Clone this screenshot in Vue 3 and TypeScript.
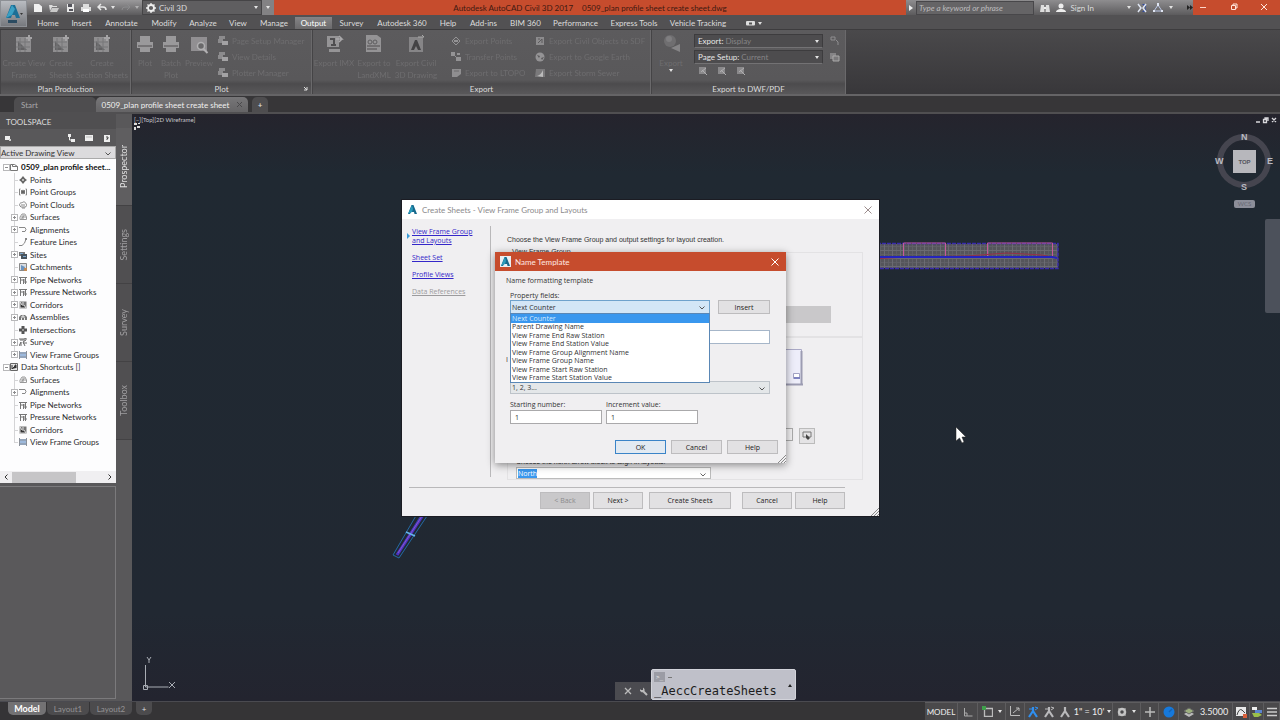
<script setup lang="ts">
import { ref } from 'vue'

interface TreeRow { label: string; icon: string; level: number; box?: string; last?: boolean }

const menus = ['Home', 'Insert', 'Annotate', 'Modify', 'Analyze', 'View', 'Manage', 'Output', 'Survey', 'Autodesk 360', 'Help', 'Add-ins', 'BIM 360', 'Performance', 'Express Tools', 'Vehicle Tracking']

const tree: TreeRow[] = [
  { label: '0509_plan profile sheet...', icon: 'drawing', level: 0, box: '-' },
  { label: 'Points', icon: 'point', level: 1 },
  { label: 'Point Groups', icon: 'pgroup', level: 1 },
  { label: 'Point Clouds', icon: 'cloud', level: 1 },
  { label: 'Surfaces', icon: 'surface', level: 1, box: '+' },
  { label: 'Alignments', icon: 'align', level: 1, box: '+' },
  { label: 'Feature Lines', icon: 'feature', level: 1 },
  { label: 'Sites', icon: 'site', level: 1, box: '+' },
  { label: 'Catchments', icon: 'catch', level: 1 },
  { label: 'Pipe Networks', icon: 'pipe', level: 1, box: '+' },
  { label: 'Pressure Networks', icon: 'pipe', level: 1, box: '+' },
  { label: 'Corridors', icon: 'corridor', level: 1, box: '+' },
  { label: 'Assemblies', icon: 'assembly', level: 1, box: '+' },
  { label: 'Intersections', icon: 'cross', level: 1 },
  { label: 'Survey', icon: 'survey', level: 1, box: '+' },
  { label: 'View Frame Groups', icon: 'frame', level: 1, box: '+', last: true },
  { label: 'Data Shortcuts []', icon: 'shortcut', level: 0, box: '-' },
  { label: 'Surfaces', icon: 'surface', level: 1 },
  { label: 'Alignments', icon: 'align', level: 1, box: '+' },
  { label: 'Pipe Networks', icon: 'pipe', level: 1 },
  { label: 'Pressure Networks', icon: 'pipe', level: 1 },
  { label: 'Corridors', icon: 'corridor', level: 1 },
  { label: 'View Frame Groups', icon: 'frame', level: 1, last: true },
]

const icons: Record<string, { d: string; fill?: string; stroke?: string }[]> = {
  drawing: [{ d: 'M.5 1.5h4l3 2v4h-7zM2.5 1.5v2h5', stroke: '#777' }],
  point: [{ d: 'M4 0l2 2.500L8 4 6 5.500 4 8 2 5.500 0 4 2 2.500z', fill: '#666' }, { d: 'M3 3h2v2H3z', fill: '#bbb' }],
  pgroup: [{ d: 'M1.500 1H.5v6h1M6.500 1h1v6h-1M2.500 2v4M5.500 2v4', stroke: '#888' }, { d: 'M4 1.500L6 4 4 6.500 2 4z', fill: '#666' }],
  cloud: [{ d: 'M1 5C-.5 3 2 1 3 2c1-2 4-1 4 1 1.500 1 .5 3-1 3H2zM2 4h4M3 7h3', stroke: '#888' }],
  surface: [{ d: 'M1 6.500V4l2-3h3l1.500 3v2.500zM2 4h5M4 1.500v5M2.500 6l3-4', stroke: '#999' }],
  align: [{ d: 'M0 1.500h6q2 2 0 4H3', stroke: '#888' }],
  feature: [{ d: 'M0 7.500h3Q6 6 7 1', stroke: '#888' }, { d: 'M6 0h2v2H6z', fill: '#888' }],
  site: [{ d: 'M0 1h6v4H0z', fill: '#777' }, { d: 'M2 3h6v5H2z', fill: '#47525c' }, { d: 'M1 2h3v1H1zM4 5h3v1H4z', fill: '#7ba8cf' }],
  catch: [{ d: 'M.5 .5h7v7h-7z', fill: '#d8dce2', stroke: '#888' }, { d: 'M2 2l4 2-1 3H2z', fill: '#6a93bf' }, { d: 'M5 5h3v3H5z', fill: '#c28a55' }],
  pipe: [{ d: 'M0 1.500h8M1.500 1v7M4.500 3v5M6.500 1v7M1 4h5M4 6h4', stroke: '#777' }],
  corridor: [{ d: 'M.5 .5h7v7h-7z', fill: '#777' }, { d: 'M1 1v6h6L5 4H3zM4 1v2', fill: '#333', stroke: '#ddd' }],
  assembly: [{ d: 'M0 7V4l2-2h4l2 2v3z', fill: '#777' }, { d: 'M2 4h4M2.500 7V5M5.500 7V5M4 1v3', stroke: '#eee' }],
  cross: [{ d: 'M2.500 0h3v2.500H8v3H5.500V8h-3V5.500H0v-3h2.500z', fill: '#555' }, { d: 'M3 3h2v2H3z', fill: '#999' }],
  survey: [{ d: 'M0 1h5l2-1v2L4 4 6 8M2 4L0 8M2 4v4M1 2h5M4 5h4', stroke: '#666' }],
  frame: [{ d: 'M1 1h6v6H1z', fill: '#9db9dc' }, { d: 'M.5 0v8M7.500 0v8M1 2h6M1 6h6', stroke: '#8a9099' }],
  shortcut: [{ d: 'M.5 .5h7v7h-7z', fill: '#e4e4e4', stroke: '#666' }, { d: 'M2 6l3-3V2h1v3M2 2v4', fill: '#333', stroke: '#333' }],
}

const fields = ['Next Counter', 'Parent Drawing Name', 'View Frame End Raw Station', 'View Frame End Station Value', 'View Frame Group Alignment Name', 'View Frame Group Name', 'View Frame Start Raw Station', 'View Frame Start Station Value']
const field = ref(fields[0])
const startNo = ref('1')
const increment = ref('1')
const sideTabs = ['Prospector', 'Settings', 'Survey', 'Toolbox']
</script>

<template>
  <div class="app">
    <header class="titlebar">
      <button class="appbtn" aria-label="Application menu">
        <svg width="25" height="26" viewBox="0 0 25 26"><path d="M5 17L10 4h4l5 13h-4l-1-3h-3l-1 3z" fill="#1c6f96" /><path d="M11 4L5 17l6-3 3-6z" fill="#3aa0c4" /><path d="M7 19h9v3H7z" fill="#2b4b61" /><path d="M19 12h3l-1.500 2z" fill="#333" /></svg>
      </button>
      <nav class="quick" aria-label="Quick access">
        <button aria-label="New"><svg viewBox="0 0 10 10"><path d="M1 1h5l3 2.500V9H1z" fill="#f1f1f1" /></svg></button>
        <button aria-label="Open"><svg viewBox="0 0 10 10"><path d="M0 2h3l1 1h4v1H3L1 8z" fill="#ddd" /><path d="M3 5h7L8 9H1z" fill="#c9c9c9" /></svg></button>
        <button aria-label="Save"><svg viewBox="0 0 10 10"><path d="M2 1h7v8H2z" fill="#e8e8e8" /><path d="M3 1h4v3H3zM4 6h4v2H4z" fill="#53535b" /></svg></button>
        <button aria-label="Plot"><svg viewBox="0 0 10 10"><path d="M2 1h6v3H2zM0 4h10v4H0z" fill="#ddd" /><path d="M2 6h6v3H2z" fill="#fff" /></svg></button>
        <button aria-label="Undo"><svg viewBox="0 0 10 10"><path d="M1 4h5q3 0 3 3M4 1L1 4l3 3" stroke="#e8e8e8" stroke-width="1.500" fill="none" /></svg></button>
        <i class="dn"></i>
        <button aria-label="Redo"><svg viewBox="0 0 10 10"><path d="M9 4H4Q1 4 1 7M6 1l3 3-3 3" stroke="#8b8b8d" fill="none" /></svg></button>
        <i class="dn dim"></i>
      </nav>
      <button class="workspace"><svg width="10" height="10" viewBox="0 0 10 10"><circle cx="5" cy="5" r="3" fill="none" stroke="#eee" stroke-width="1.800" /><path d="M5 0v2M5 8v2M0 5h2M8 5h2M1.500 1.500l1.500 1.500M7 7l1.500 1.500M8.500 1.500L7 3M3 7L1.500 8.500" stroke="#eee" stroke-width="1.300" /></svg><span>Civil 3D</span><i class="dn"></i></button>
      <button class="qmore" aria-label="Customize"><i class="dn"></i></button>
      <div class="title"><span>Autodesk AutoCAD Civil 3D 2017</span><span>0509_plan profile sheet create sheet.dwg</span></div>
      <div class="info">
        <button class="arrow" aria-label="Expand"><svg width="4" height="6"><path d="M0 0l4 3-4 3z" fill="#eee" /></svg></button>
        <input type="search" aria-label="Search" placeholder="Type a keyword or phrase">
        <button aria-label="Find"><svg width="10" height="10" viewBox="0 0 10 10"><path d="M1 2h3l.5 7H0zM6 2h3l1 7H5.500z" fill="#ddd" /><path d="M4 4h2v2H4z" fill="#eee" /></svg></button>
        <button class="signin"><svg width="10" height="10" viewBox="0 0 10 10"><circle cx="5" cy="3" r="2.500" fill="#eee" /><path d="M0 9q0-2 4-3h2q4 1 4 3z" fill="#eee" /></svg><span>Sign In</span><i class="dn"></i></button>
        <button aria-label="Exchange"><svg width="10" height="10" viewBox="0 0 10 10"><path d="M5 1h4v4zM5 9h4V5z" fill="#324b9b" /><path d="M1 1l3 4-3 4M9 1L6 5l3 4" stroke="#dfe5f2" stroke-width="1.500" fill="none" /></svg></button>
        <button aria-label="Connect"><svg width="10" height="10" viewBox="0 0 10 10"><path d="M5 2L1 8h8z" stroke="#bcc8e8" fill="none" /><path d="M4 0h2v3H4zM0 7h2v2H0zM8 7h2v2H8z" fill="#dfe5f2" /></svg></button>
        <i class="dn"></i><svg class="more" width="6" height="5"><path d="M0 0l3 2.500L0 5zM3 0l3 2.500L3 5z" fill="#222" /></svg>
      </div>
      <div class="wincontrols">
        <button aria-label="Minimize"><svg width="8" height="8"><path d="M1 4.500h6" stroke="#ffd5c8" /></svg></button>
        <button aria-label="Restore"><svg width="8" height="8"><path d="M1.500 2.500h4v4h-4zM3 2.500V1h4v4H5.500" stroke="#ffe5dc" fill="none" /></svg></button>
        <button aria-label="Close"><svg width="8" height="8"><path d="M1 1l6 6M7 1L1 7" stroke="#ffe5dc" /></svg></button>
      </div>
    </header>

    <nav class="menubar" aria-label="Ribbon tabs">
      <button v-for="m in menus" :key="m" :class="{ on: m === 'Output' }">{{ m }}</button>
      <button aria-label="Ribbon display"><svg width="18" height="7"><rect x="1" y="1" width="9" height="4.500" rx="1" fill="#ddd" /><path d="M4 2.500h3v2H4z" fill="#555" /><path d="M13 2h4l-2 3z" fill="#ddd" /></svg></button>
    </nav>

    <section class="ribbon">
      <div class="panel p1">
        <div class="tools">
          <button v-for="(t, i) in [['Create View', 'Frames'], ['Create', 'Sheets'], ['Create', 'Section Sheets']]" :key="i" class="big">
            <svg width="20" height="20" viewBox="0 0 20 20"><rect x="2" y="3" width="15" height="15" fill="#8f8e90" /><path d="M4 7v9h9z" fill="#636264" /><path d="M6 4v14M11 4v14M2 8h14M2 13h14" stroke="#777678" /><path d="M15 1v6M12 4h6" stroke="#a5a4a6" stroke-width="2" /></svg>
            <span>{{ t[0] }}</span><span>{{ t[1] }}</span>
          </button>
        </div>
        <h2>Plan Production</h2>
      </div>
      <div class="panel p2">
        <div class="tools">
          <button v-for="(t, i) in [['Plot', ''], ['Batch', 'Plot']]" :key="i" class="big">
            <svg width="20" height="20" viewBox="0 0 20 20"><path d="M5 2h10v6H5zM2 8h16v6H2zM5 12h10v6H5z" fill="#9a999b" /><path d="M3 12h14" stroke="#686769" stroke-width="1.500" /></svg>
            <span>{{ t[0] }}</span><span>{{ t[1] }}</span>
          </button>
          <button class="big"><svg width="20" height="20" viewBox="0 0 20 20"><path d="M2 3h16v14H2z" fill="#918f92" /><circle cx="12" cy="12" r="3.500" fill="#69686a" stroke="#b1b0b2" stroke-width="1.500" /><path d="M14.500 15l4 4" stroke="#b1b0b2" stroke-width="2" /></svg><span>Preview</span><span></span></button>
          <div class="small">
            <button v-for="t in ['Page Setup Manager', 'View Details', 'Plotter Manager']" :key="t"><svg width="10" height="10" viewBox="0 0 10 10"><path d="M1 0h6v3H1zM0 3h5v4H0z" fill="#8c8b8d" /><path d="M4 5h6v4H4z" fill="#a3a2a4" /></svg><span>{{ t }}</span></button>
          </div>
        </div>
        <h2>Plot<svg width="5" height="5"><path d="M1 1l3 3M4 1v3H1" stroke="#ddd" fill="none" /></svg></h2>
      </div>
      <div class="panel p3">
        <div class="tools">
          <button class="big"><svg width="20" height="20" viewBox="0 0 20 20"><path d="M3 2h12v11H3zM5 15h11v3H5z" fill="#959496" /><path d="M6 5h4v6M7 11h5" stroke="#4f4e50" fill="none" stroke-width="2" /><path d="M12 5h6l-3-3M18 5l-3 3" stroke="#a9a8aa" fill="none" stroke-width="1.500" /></svg><span>Export IMX</span><span></span></button>
          <button class="big"><svg width="20" height="20" viewBox="0 0 20 20"><path d="M2 1h11l4 3v14H2z" fill="#949395" /><path d="M3 12h13M3 15h10" stroke="#656466" stroke-width="1.500" /><circle cx="6" cy="8" r="2" fill="none" stroke="#5e5d5f" /><circle cx="11" cy="8" r="2" fill="none" stroke="#5e5d5f" /></svg><span>Export to</span><span>LandXML</span></button>
          <button class="big"><svg width="20" height="20" viewBox="0 0 20 20"><path d="M3 3h14v15H3z" fill="#868587" /><path d="M5 16l4-10h2l4 10h-3l-2-4-2 4z" fill="#444345" /><path d="M12 3h6l-2-2" stroke="#aaa" fill="none" /></svg><span>Export Civil</span><span>3D Drawing</span></button>
          <div class="small">
            <button aria-label="Export Points"><svg width="10" height="10" viewBox="0 0 10 10"><path d="M5 1l4 4-4 4-4-4z" fill="none" stroke="#949395" /><path d="M3 4h4v2H3z" fill="#949395" /></svg><span>Export Points</span></button>
            <button><svg width="10" height="10" viewBox="0 0 10 10"><path d="M0 0h4v4H0zM5 5h5v4H5zM6 1h3v2H6z" fill="#949395" /><path d="M2 2l6 6" stroke="#949395" /></svg><span>Transfer Points</span></button>
            <button><svg width="10" height="10" viewBox="0 0 10 10"><path d="M1 1h9v5L6 9H1z" fill="#8f8e90" /><path d="M3 3h5" stroke="#6c6b6d" /></svg><span>Export to LTOPO</span></button>
          </div>
          <div class="small">
            <button><svg width="10" height="10" viewBox="0 0 10 10"><path d="M1 1h8v8H1z" fill="#8c8b8d" /><path d="M3 7l4-4v4M3 3h2" stroke="#5c5b5d" fill="none" /></svg><span>Export Civil Objects to SDF</span></button>
            <button><svg width="10" height="10" viewBox="0 0 10 10"><circle cx="5" cy="5" r="4.500" fill="#949395" /><path d="M2 3l3 1-1 2zM6 6l3-1-2 3z" fill="#59585a" /></svg><span>Export to Google Earth</span></button>
            <button><svg width="10" height="10" viewBox="0 0 10 10"><path d="M1 1h9v8H0z" fill="#7a797b" /><path d="M2 8q4-1 6-6v7z" fill="#bbb" /></svg><span>Export Storm Sewer</span></button>
          </div>
        </div>
        <h2>Export</h2>
      </div>
      <div class="panel p4">
        <div class="tools">
          <button class="big"><svg width="20" height="20" viewBox="0 0 20 20"><circle cx="9" cy="7" r="6" fill="#6f6e70" /><circle cx="8" cy="5" r="3" fill="#7f7e80" /><path d="M10 14l9-4v8z" fill="#868587" /></svg><span>Export</span><i class="dn"></i></button>
          <div class="combos">
            <button class="combo"><b>Export:</b><span>Display</span><i class="dn"></i></button>
            <button class="combo"><b>Page Setup:</b><span>Current</span><i class="dn"></i></button>
            <div class="minis"><svg v-for="n in 3" :key="n" width="10" height="10" viewBox="0 0 10 10"><path d="M1 1h7v7H1z" fill="#8a898b" /><path d="M4 4l5 5M3 6l5-4" stroke="#b0afb1" /></svg></div>
          </div>
          <div class="sides"><svg width="10" height="10"><path d="M1 1h4v3H1zM6 4l2 2v3" fill="none" stroke="#8f8e90" /></svg><svg width="10" height="10"><path d="M0 1h6v6H0z" fill="#858486" /><path d="M3 4h6v5H3z" fill="#7a797b" stroke="#aaa" /></svg></div>
        </div>
        <h2>Export to DWF/PDF</h2>
      </div>
    </section>

    <nav class="doctabs" aria-label="Drawings">
      <button class="doc start">Start</button>
      <button class="doc active">0509_plan profile sheet create sheet<svg width="5" height="5"><path d="M0 0l5 5M5 0L0 5" stroke="#4a494b" /></svg></button>
      <button class="doc plus" aria-label="New drawing">+</button>
    </nav>

    <main class="work">
      <aside class="toolspace">
        <div class="tsmain">
          <h1>TOOLSPACE</h1>
          <div class="tsbar">
            <button aria-label="View"><svg width="8" height="8"><path d="M1 2h5v4H1z" fill="#eee" /><path d="M5 5h2v2H5z" fill="#ccc" /></svg></button>
            <button aria-label="Tree"><svg width="8" height="8"><path d="M1 0h3v3H1zM4 5h4v3H4z" fill="#eee" /><path d="M2.500 3v3H4" stroke="#eee" fill="none" /></svg></button>
            <button aria-label="Panorama"><svg width="8" height="8"><path d="M0 1h8v6H0z" fill="#eee" /><path d="M1 3h6" stroke="#bbb" /></svg></button>
            <button class="q" aria-label="Help"><svg width="8" height="8"><path d="M1 1h6v7H1z" fill="#eee" /><path d="M3 3h2v1.500H4V6" stroke="#444" fill="none" /></svg></button>
          </div>
          <div class="selwrap viewsel">
            <select aria-label="View"><option>Active Drawing View</option></select>
            <svg width="6" height="4"><path d="M.5 .5L3 3 5.500 .5" stroke="#555" fill="none" /></svg>
          </div>
          <ul class="tree">
            <li v-for="(r, i) in tree" :key="i" :class="['lv' + r.level, { last: r.last, first: i === 0 }]">
              <span class="node"><i v-if="r.box" class="box" :class="{ open: r.box === '-' }"></i></span>
              <svg width="8" height="8" viewBox="0 0 8 8"><path v-for="(p, k) in icons[r.icon]" :key="k" :d="p.d" :fill="p.fill ?? 'none'" :stroke="p.stroke ?? 'none'" /></svg>
              <span class="lbl">{{ r.label }}</span>
            </li>
          </ul>
          <div class="hscroll"><svg width="4" height="6"><path d="M3.500 .5L1 3l2.500 2.500" stroke="#333" fill="none" /></svg><i></i><svg width="4" height="6"><path d="M.5 .5L3 3 .5 5.500" stroke="#333" fill="none" /></svg></div>
          <div class="blank"></div>
        </div>
        <div class="tstabs"><button v-for="t in sideTabs" :key="t" :class="{ on: t === 'Prospector' }"><span>{{ t }}</span></button></div>
      </aside>

      <section class="canvas">
        <span class="vp">[−][Top][2D Wireframe]</span>
        <svg class="drawing" width="100%" height="100%">
          <defs><pattern id="grid" width="8" height="8" patternUnits="userSpaceOnUse"><rect width="8" height="8" fill="#55555b" /><path d="M0 4.500h8M4.500 0v8" stroke="#5f5f66" /><path d="M0 .5h8M.5 0v8" stroke="#6b6b72" /></pattern></defs>
          <rect x="740" y="130" width="186" height="24" fill="url(#grid)" />
          <path d="M740 129.500h186v25H740" fill="none" stroke="#3a2cab" stroke-width="1.500" stroke-dasharray="4 1" />
          <path d="M771.500 142v-13h42v13M855.500 142v-13h65v13" fill="none" stroke="#c45a9a" />
          <path d="M740 145l35-2 60-1 40-3 35 2 15 3" fill="none" stroke="#93304b" />
          <path d="M740 143h180l5 1" fill="none" stroke="#2424bd" stroke-width="2" />
          <g fill="none"><path d="M285 400l-24 41 6 3 28-42" stroke="#246aa4" /><path d="M289 401l-24 39" stroke="#2a4a91" /><path d="M291 401l-26 40" stroke="#4a35c5" stroke-width="3" /><path d="M290 402l-24 37" stroke="#8c56c8" /><path d="M274 418l9 4" stroke="#65b6ea" stroke-width="1.500" /></g>
          <g stroke="#a9adb4" fill="none"><path d="M13.500 551v22h23M11.500 571.500h4v4h-4zM37 568l6 6M43 568l-6 6M15 543l2 3 2-3M17 546v3" /></g>
        </svg>
        <svg class="tiny" width="9" height="8"><path d="M1 0h3v2H1zM4 3h3v2H4zM1 4h2v3H1zM5 0h2v1H5z" fill="#ddd" /></svg>
        <div class="mdi"><svg width="22" height="7"><path d="M1 5h4M8.500 2.500h3v3h-3zM10 2V1h3v3M17 1l4 4M21 1l-4 4" stroke="#d8d8dc" stroke-width="1.300" fill="none" /></svg></div>
        <div class="cube">
          <svg width="58" height="58"><circle cx="29" cy="29" r="24" fill="none" stroke="#45454f" stroke-width="6" /></svg>
          <b class="n">N</b><b class="s">S</b><b class="w">W</b><b class="e">E</b><button>TOP</button>
        </div>
        <button class="wcs">WCS</button>
        <div class="navbar"></div>
        <svg class="cursor" width="13" height="20"><path d="M1 1v14l3.500-3 2.500 5 2-1-2-5h4z" fill="#fff" stroke="#222" stroke-width=".5" /></svg>

        <div class="cmd">
          <div class="cmdgrip"><svg width="8" height="8"><path d="M1 1l6 6M7 1L1 7" stroke="#bbb" stroke-width="1.300" /></svg><svg width="9" height="9"><path d="M4 4l4 4" stroke="#bbb" stroke-width="2" /><path d="M1 2v2l2 1.500L5.500 4V2L4 .5V3H2z" fill="#bbb" /></svg></div>
          <label class="cmdbox"><span class="prompt"><i>&gt;_</i><em></em></span><input aria-label="Command" value="_AeccCreateSheets"><i class="up"></i></label>
        </div>
      </section>
    </main>

    <footer class="status">
      <nav class="layouts"><button class="on">Model</button><button>Layout1</button><button>Layout2</button><button class="add">+</button></nav>
      <div class="stat">
        <button class="model">MODEL</button>
        <button class="c2" aria-label="Snap"><svg width="10" height="10"><path d="M1.500 1v8h8M1 6h3v3" stroke="#aaa" fill="none" /></svg></button>
        <button class="c3" aria-label="Osnap"><svg width="11" height="11"><path d="M2.500 2.500h8v8h-8z" stroke="#bbb" fill="none" stroke-width="1.300" /><path d="M0 0h4v4H0z" fill="#3fa04b" /></svg><i class="dn"></i></button>
        <button class="c4" aria-label="Isodraft"><svg width="12" height="11"><path d="M1.500 0v9.500H11M4 7l6-5M7 2h3v3" stroke="#bbb" fill="none" /></svg></button>
        <div class="c5"><svg v-for="n in 3" :key="n" width="12" height="12" viewBox="0 0 12 12"><path d="M6 1v5M6 5l-4 6M6 5l4 6" :stroke="n === 1 ? '#2f8ff0' : '#b9b9bb'" stroke-width="2.200" fill="none" /><path v-if="n < 3" d="M8 1l3 1-3 2M2 3h3" :stroke="n === 1 ? '#2f8ff0' : '#b9b9bb'" fill="none" /></svg></div>
        <button class="c6">1" = 10'<i class="dn"></i></button>
        <button class="c7" aria-label="Settings"><svg width="10" height="10"><circle cx="5" cy="5" r="3" fill="none" stroke="#c4c4c4" stroke-width="2.500" /><path d="M1.500 1.500l1 1M7.500 7.500l1 1M8.500 1.500l-1 1M2.500 7.500l-1 1" stroke="#c4c4c4" stroke-width="1.500" /></svg><i class="dn"></i></button>
        <button class="c8" aria-label="Add"><svg width="10" height="10"><path d="M5 0v10M0 5h10" stroke="#bbb" stroke-width="1.500" /></svg></button>
        <button class="c9" aria-label="Hardware"><svg width="12" height="12"><circle cx="6" cy="6" r="5.500" fill="#1679dc" /><path d="M6 6l3-3" stroke="#1263b6" fill="none" stroke-width="1.500" /></svg></button>
        <button class="c10"><svg width="12" height="12"><path d="M1 8l5-3 5 3-5 3z" fill="#bbb" /><path d="M1 5l5-3 5 3-5 3z" fill="#9db07e" stroke="#666" /></svg>3.5000</button>
        <button class="c11" aria-label="Isolate"><svg width="12" height="12"><path d="M1 1h10v9H1z" fill="#e8e8e8" /><path d="M2 9Q4 2 7 4l3 3" stroke="#444" fill="none" /><path d="M8 8h4v4H8z" fill="#d9603a" /></svg></button>
        <button class="c12" aria-label="Clean"><svg width="12" height="12"><path d="M1 1h5v3H1z" fill="#eee" /><path d="M4 4h7v3H4z" fill="#5b84cf" /><path d="M1 7h7l3 2-4 2H3z" fill="#9bc04a" /></svg></button>
        <button class="c13" aria-label="Customization"><svg width="12" height="12"><path d="M1 2.500h10M1 6h10M1 9.500h10" stroke="#ccc" stroke-width="1.300" /></svg></button>
      </div>
    </footer>

    <section class="dlg sheets" role="dialog" aria-label="Create Sheets">
      <header><svg class="logo" width="11" height="11" viewBox="0 0 11 11"><path d="M1 10L4.500 1h2L10 10H7.500L7 8H4L3 10z" fill="#17698d" /><path d="M5 1L1 10l4-2 1-3z" fill="#2a9bbb" /></svg><span>Create Sheets - View Frame Group and Layouts</span><button aria-label="Close"><svg width="8" height="8"><path d="M.5 .5l7 7M7.500 .5l-7 7" stroke="#9b8c8c" /></svg></button></header>
      <div class="sbody">
        <nav class="steps">
          <a class="here" href="#">View Frame Group<br>and Layouts</a><a href="#">Sheet Set</a><a href="#">Profile Views</a><a class="off" href="#">Data References</a>
        </nav>
        <div class="spage">
          <p>Choose the View Frame Group and output settings for layout creation.</p>
          <fieldset class="fs1"><legend>View Frame Group</legend><button disabled aria-label="Choose frames"></button></fieldset>
          <fieldset class="fs2">
            <svg class="thumb" width="36" height="37"><path d="M.5 .5h34v35H.5z" fill="#eeeefa" stroke="#aaa9c6" /><path d="M2 35.500h34M34.500 2v34" stroke="#9c9cb2" stroke-width="2" /><path d="M26.500 24.500h6v5h-6z" fill="#fff" stroke="#a3a3c4" /><path d="M27 28h6v2h-6z" fill="#7e83c0" /></svg>
            <div class="pick"><input aria-label="Style"><button aria-label="Pick"><svg width="10" height="10"><path d="M1 1h8v5H1z" fill="none" stroke="#777" /><path d="M4 3l4 4-2 2-2-2z" fill="#444" /></svg></button></div>
            <label for="north">Choose the north arrow block to align in layouts:</label>
            <div class="selwrap north"><select id="north"><option>North</option></select><mark>North</mark><svg width="6" height="4"><path d="M.5 .5L3 3 5.500 .5" stroke="#666" fill="none" /></svg></div>
          </fieldset>
        </div>
      </div>
      <footer><button disabled class="w50">&lt; Back</button><button class="w50">Next &gt;</button><button class="cs">Create Sheets</button><button class="w50">Cancel</button><button class="w50">Help</button></footer>
      <svg class="grip" width="8" height="8"><path d="M0 8l8-8M3 8l5-5M6 8l2-2" stroke="#888" /></svg>
    </section>

    <section class="dlg name" role="dialog" aria-label="Name Template">
      <header><svg class="logo" width="11" height="11" viewBox="0 0 11 11"><path d="M0 0h11v11H0z" fill="#e9eef2" /><path d="M1 10L4.500 1h2L10 10H7.500L7 8H4L3 10z" fill="#17698d" /><path d="M5 1L1 10l4-2 1-3z" fill="#2a9bbb" /></svg><span>Name Template</span><button aria-label="Close"><svg width="8" height="8"><path d="M.5 .5l7 7M7.500 .5l-7 7" stroke="#fff" /></svg></button></header>
      <div class="nbody">
        <p>Name formatting template</p>
        <label class="pf" for="field">Property fields:</label>
        <div class="row">
          <div class="selwrap fieldsel">
            <select id="field" v-model="field"><option v-for="f in fields" :key="f">{{ f }}</option></select>
            <svg width="6" height="4"><path d="M.5 .5L3 3 5.500 .5" stroke="#555" fill="none" /></svg>
            <ul class="list" role="listbox"><li v-for="f in fields" :key="f" role="option" :class="{ on: f === field }" :aria-selected="f === field" @click="field = f">{{ f }}</li></ul>
          </div>
          <button>Insert</button>
        </div>
        <input class="nm" aria-label="Name">
        <p class="inc">I</p>
        <div class="selwrap fmt"><select aria-label="Number style"><option>1, 2, 3...</option></select><svg width="6" height="4"><path d="M.5 .5L3 3 5.500 .5" stroke="#555" fill="none" /></svg></div>
        <div class="nums">
          <label>Starting number:<input v-model="startNo"></label>
          <label>Increment value:<input v-model="increment"></label>
        </div>
        <div class="btns"><button class="ok">OK</button><button>Cancel</button><button>Help</button></div>
      </div>
      <svg class="grip" width="8" height="8"><path d="M0 8l8-8M3 8l5-5M6 8l2-2" stroke="#888" /></svg>
    </section>
  </div>
</template>

<style>
html, body { margin: 0; background: #353436; }
</style>

<style scoped>
.app { position: relative; display: flex; flex-direction: column; min-height: 100vh; overflow: hidden; font: 8px/12px "Lato", "Open Sans", sans-serif; color: #dcdcdc; background: #353436; }
.app * { box-sizing: border-box; }
button, input, select { font: inherit; color: inherit; margin: 0; padding: 0; border: 0; background: none; border-radius: 0; outline: none; }
button { display: flex; align-items: center; justify-content: center; white-space: nowrap; }
select { appearance: none; width: 100%; height: 100%; }
h1, h2, p, ul { margin: 0; padding: 0; font-size: inherit; font-weight: 400; list-style: none; }
svg { display: block; flex: none; }
.dn { flex: none; width: 0; height: 0; border: 2px solid transparent; border-top: 3px solid #e4e4e4; border-bottom: 0; }
.dim { opacity: .5; }

.titlebar { display: flex; height: 15px; background: #c64c2d; }
.appbtn { position: absolute; left: 0; top: 0; width: 27px; height: 27px; background: linear-gradient(#b9bcc1, #77797e); border: 1px solid #8d9095; z-index: 2; }
.quick { display: flex; flex: none; align-items: center; width: 142px; padding-left: 33px; gap: 6px; background: linear-gradient(#9a999b, #5c5b5d); }
.quick svg { width: 10px; height: 10px; }
.quick .dn { margin-left: -2px; }
.workspace { flex: none; width: 120px; padding: 0 3px; gap: 3px; background: #5f5e60; border: 1px solid #454446; }
.workspace span { flex: 1; text-align: left; }
.qmore { flex: none; width: 12px; background: #838284; }
.title { flex: 1; display: flex; justify-content: center; align-items: center; gap: 9px; color: #401911; white-space: nowrap; }
.info { display: flex; flex: none; align-items: center; width: 287px; gap: 6px; background: linear-gradient(#8e8d8f, #5c5b5d); }
.info .arrow { width: 4px; margin-left: 3px; }
.info input { width: 119px; height: 14px; margin-left: -3px; padding: 0 2px; background: #656466; border: 1px solid #48474a; font-style: italic; }
.info input::placeholder { color: #bcbbbd; opacity: 1; }
.signin { gap: 4px; width: 75px; }
.signin span { flex: 1; text-align: left; }
.info .more { margin-left: 8px; }
.wincontrols { display: flex; flex: none; justify-content: space-between; width: 87px; padding: 0 8px 0 2px; }
.wincontrols button { width: 16px; height: 14px; }

.menubar { display: grid; grid-template-columns: 34px 33px 47px 38px 40px 30px 42px 37px 39px 62px 30px 41px 43px 57px 60px 68px 44px; height: 15px; padding: 2px 0 0 31px; background: #525153; border-bottom: 1px solid #3d3c3e; }
.menubar .on { background: linear-gradient(#858486, #6b6a6c); color: #fff; }

.ribbon { display: flex; height: 66px; background: linear-gradient(#4a494b, #38373a); border-bottom: 2px solid #656466; }
.panel { flex: none; display: flex; flex-direction: column; background: linear-gradient(#5c5b5d, #59585a 78%, #4c4b4d 84%, #59585a); border-left: 1px solid #454446; border-right: 1px solid #6a696b; }
.panel h2 { display: flex; justify-content: center; position: relative; height: 11px; line-height: 12px; }
.panel h2 svg { position: absolute; right: 3px; top: 3px; }
.p1 { width: 131px; } .p2 { width: 181px; } .p3 { width: 339px; } .p4 { width: 195px; }
.tools { display: flex; flex: 1; padding-top: 4px; color: #6e6d6f; filter: blur(.4px); }
.big { flex-direction: column; justify-content: flex-start; width: 38px; }
.big span { height: 12px; line-height: 12px; }
.big svg { margin-bottom: 3px; }
.p1 .tools { padding-left: 4px; }
.p1 .big:nth-child(2) { width: 36px; }
.p1 .big:last-child { width: 46px; }
.p2 .big { width: 26px; }
.p2 .big:nth-child(3) { width: 30px; }
.p3 .big { width: 42px; }
.p3 .big:nth-child(2) { width: 38px; }
.p3 .big:nth-child(3) { width: 46px; }
.small { display: flex; flex-direction: column; padding-left: 4px; gap: 2px; }
.small button { height: 14px; gap: 4px; justify-content: flex-start; }
.p3 .small { width: 86px; padding-left: 12px; }
.p3 .small:last-child { width: 110px; padding-left: 10px; }
.p4 .tools { filter: none; padding-top: 4px; }
.combos { width: 133px; padding-left: 4px; display: flex; flex-direction: column; gap: 2px; }
.combo { height: 14px; padding: 0 3px; gap: 2px; background: #4d4c4e; border: 1px solid #3d3c3e; border-bottom-color: #737274; }
.combo b { font-weight: 400; color: #e6e6e6; }
.combo span { flex: 1; text-align: left; color: #858486; }
.minis { display: flex; gap: 9px; padding-left: 4px; }
.sides { display: flex; flex-direction: column; gap: 6px; padding: 2px 0 0 7px; }

.doctabs { display: flex; align-items: stretch; height: 18px; padding: 1px 0 0 14px; border-bottom: 2px solid #504f51; background: #373638; }
.doc { background: #4e4d4f; color: #a9a8aa; border-radius: 5px 5px 0 0; }
.start { width: 82px; justify-content: flex-start; padding-left: 7px; }
.active { color: #f0f0f0; background: linear-gradient(#777678, #656466); width: 152px; gap: 8px; }
.plus { width: 16px; margin-left: 4px; color: #ddd; font-weight: 700; }

.work { display: flex; flex: 1; }
.toolspace { display: flex; flex: none; width: 132px; background: #59585a; }
.tsmain { display: flex; flex-direction: column; width: 116px; }
.tsmain h1 { height: 15px; padding: 2px 0 0 6px; background: #504f51; }
.tsbar { display: flex; align-items: center; height: 17px; padding: 0 5px 0 4px; gap: 10px; }
.tsbar button:first-child { margin-right: auto; }
.selwrap { position: relative; }
.selwrap > svg { position: absolute; right: 4px; top: 5px; pointer-events: none; }
.viewsel { height: 13px; color: #333; background: #dcdbdd; border: 1px solid #aaa; }
.tree { height: 312px; padding-top: 2px; background: #fdfdfe; color: #2c2c2e; }
.tree li { display: flex; align-items: center; height: 12px; white-space: nowrap; }
.tree li:nth-child(even) { height: 13px; }
.node { display: flex; position: relative; align-items: center; align-self: stretch; width: 10px; padding-left: 3px; }
.lv1 .node { width: 18px; padding-left: 11px; margin-right: 1px; }
.lv1 .node::before { content: ""; position: absolute; left: 14px; top: 0; bottom: 0; border-left: 1px solid #d4d4d6; }
.lv1.last .node::before { bottom: 50%; }
.lv1 .node::after { content: ""; position: absolute; left: 14px; width: 4px; top: 50%; border-top: 1px solid #d4d4d6; }
.box { position: relative; z-index: 1; width: 7px; height: 7px; border: 1px solid #b8b8ba; background: linear-gradient(#8c8c8e, #8c8c8e) center / 3px 1px no-repeat, linear-gradient(#8c8c8e, #8c8c8e) center / 1px 3px no-repeat, #fff; }
.box.open { background: linear-gradient(#8c8c8e, #8c8c8e) center / 3px 1px no-repeat, #fff; }
.lbl { margin-left: 3px; }
.first .lbl { font-weight: 700; color: #111; }
.hscroll { display: flex; align-items: center; height: 12px; padding: 0 4px; background: #f0eff1; gap: 4px; }
.hscroll i { width: 64px; height: 11px; background: #c6c5c7; margin-right: auto; }
.blank { flex: 1; margin: 3px 0 2px; border: 1px solid #7b7a7c; border-left: 0; background: #5a595b; }
.tstabs { flex: 1; padding-top: 14px; }
.tstabs button { width: 16px; height: 78px; color: #a09fa1; background: #504f51; border-bottom: 1px solid #434244; }
.tstabs .on { background: #5f5e60; color: #e0e0e0; }
.tstabs span { writing-mode: vertical-rl; transform: rotate(180deg); font-size: 9px; }

.canvas { flex: 1; position: relative; background: linear-gradient(#25242d, #202932 10%, #212832 85%, #23242f); }
.vp { position: absolute; left: 2px; top: 0; font: 6px/12px "Lato", sans-serif; color: #c8c8cc; }
.drawing { position: absolute; inset: 0; }
.tiny { position: absolute; left: 1px; top: 9px; }
.mdi { position: absolute; right: 3px; top: 3px; }
.cube { position: absolute; right: 7px; top: 18px; width: 58px; height: 58px; font: 700 9px/12px "Liberation Sans", sans-serif; color: #b9bac0; }
.cube b { position: absolute; }
.n { left: 26px; top: -1px; } .s { left: 26px; bottom: -3px; } .w { left: 0; top: 23px; } .e { right: 0; top: 23px; }
.cube button { position: absolute; left: 18px; top: 18px; width: 23px; height: 23px; background: #b7b7bc; color: #55555c; font: 700 6px/8px "Liberation Sans", sans-serif; }
.wcs { position: absolute; right: 25px; top: 86px; width: 21px; height: 8px; border-radius: 2px; background: #8c8e99; color: #666873; font-size: 6px; }
.navbar { position: absolute; right: 0; top: 105px; width: 15px; height: 94px; background: #4c515b; border-radius: 2px 0 0 2px; }
.cursor { position: absolute; left: 823px; top: 312px; }
.cmd { position: absolute; left: 483px; bottom: 1px; display: flex; align-items: flex-end; }
.cmdgrip { display: flex; align-items: center; gap: 7px; width: 36px; height: 18px; padding-left: 9px; background: #4b4b50; }
.cmdbox { position: relative; display: block; width: 145px; height: 31px; background: #bfc0c9; border: 1px solid #d2d3da; border-radius: 2px; color: #1c1c20; }
.prompt { display: flex; align-items: center; gap: 3px; padding: 2px; height: 14px; }
.prompt i { width: 11px; height: 10px; background: #9b9ca5; color: #eee; font: 6px/9px "DejaVu Sans Mono", monospace; text-align: center; }
.prompt em { width: 4px; height: 1px; background: #777; }
.cmdbox input { width: 128px; height: 15px; padding-left: 2px; font: 12px/15px "DejaVu Sans Mono", monospace; display: block; }
.up { position: absolute; right: 3px; top: 14px; border: 2px solid transparent; border-bottom: 3px solid #222; border-top: 0; }

.status { display: flex; justify-content: space-between; height: 19px; border-top: 1px solid #4a4a50; background: #353436; }
.layouts { display: flex; padding-left: 8px; height: 13px; }
.layouts button { width: 42px; margin-right: 1px; color: #949395; background: #4c4b4d; border-radius: 0 0 5px 5px; }
.layouts .on { width: 38px; color: #fff; background: #737274; font-weight: 700; font-size: 9px; }
.layouts .add { width: 16px; margin-left: 3px; color: #ddd; }
.stat { display: flex; padding-bottom: 1px; color: #eee; }
.stat > * { display: flex; flex: none; align-items: center; justify-content: center; gap: 5px; height: 18px; background: #4a494b; border: 1px solid #5e5d5f; border-width: 1px 1px 0 0; }
.model { width: 33px; } .c2 { width: 20px; } .c3 { width: 28px; } .c4 { width: 19px; } .c5 { width: 48px; } .c6 { width: 40px; } .c7 { width: 28px; } .c8 { width: 18px; } .c9 { width: 20px; } .c10 { width: 54px; } .c11 { width: 17px; } .c12 { width: 14px; } .c13 { width: 16px; }
.stat .c5 { border-right: 0; gap: 4px; }
.stat .c10, .stat .c6 { font-size: 9px; }
.stat .c6 { gap: 3px; }

.dlg { position: absolute; display: flex; flex-direction: column; background: #f0eff1; color: #333; font: 7px/9px "Open Sans", "Noto Sans", sans-serif; }
.dlg header { display: flex; align-items: center; gap: 4px; font: 8px/12px "Lato", sans-serif; }
.dlg header button { margin-left: auto; width: 20px; height: 19px; }
.dlg button { color: #222; }
.sheets { left: 402px; top: 200px; width: 477px; height: 316px; box-shadow: 0 0 0 1px #1b1c23; }
.sheets header { height: 19px; padding: 0 1px 0 5px; background: #fff; color: #8b8a8c; }
.sbody { display: flex; flex: 1; padding-top: 7px; }
.steps { width: 89px; height: 251px; display: flex; flex-direction: column; align-items: flex-start; gap: 8px; padding: 1px 0 0 10px; border-right: 1px solid #b9b8ba; }
.steps a { color: #3427c9; position: relative; }
.steps .off { color: #9c9b9d; }
.steps .here::before { content: ""; position: absolute; left: -5px; top: 6px; border: 3px solid transparent; border-left-color: #3a9bd8; border-right: 0; }
.spage { flex: 1; padding: 9px 16px 0 16px; }
.spage p { font: 7px/10px "Liberation Sans", sans-serif; margin-bottom: 2px; }
.dlg fieldset { margin: 0; border: 1px solid #e3e2e4; min-width: 0; }
.dlg .fs1 { height: 90px; padding: 0; font: 7px/10px "Liberation Sans", sans-serif; display: flex; justify-content: flex-end; align-items: flex-start; }
.fs1 legend { padding: 0 2px; margin-left: 2px; }
.fs1 button { width: 96px; height: 17px; margin: 49px 31px 0 0; background: #c9c8ca; }
.dlg .fs2 { display: flex; flex-direction: column; padding: 11px 0 0 8px; height: 143px; }
.fs2 .thumb { align-self: flex-end; margin-right: 59px; }
.pick { display: flex; justify-content: flex-end; gap: 6px; margin: 42px 47px 0 0; }
.pick input { width: 220px; height: 13px; border: 1px solid #aaa; }
.pick button { width: 16px; height: 16px; border: 1px solid #bbb; background: #e4e3e5; }
.fs2 label { font: 7px/10px "Liberation Sans", sans-serif; margin-top: 13px; }
.north { width: 195px; height: 12px; flex: none; background: #fff; border: 1px solid #bbb; }
.north select { opacity: 0; }
.north mark { position: absolute; left: 1px; top: 1px; background: #3997ee; color: #fff; line-height: 9px; }
.sheets footer { display: flex; justify-content: flex-end; margin: 0 34px 0 7px; padding-top: 4px; height: 29px; border-top: 1px solid #b9b8ba; gap: 3px; }
.sheets footer button, .nbody .row > button, .btns button { height: 17px; background: #e2e1e3; border: 1px solid #bdbcbe; }
.sheets footer .w50 { width: 50px; }
.sheets footer .cs { width: 82px; margin: 0 8px 0 3px; }
.sheets footer button:disabled { background: #c9c8ca; color: #8b8a8c; }
.grip { position: absolute; right: 0; bottom: 0; }

.name { left: 495px; top: 252px; width: 291px; height: 211px; box-shadow: 0 2px 8px rgba(0, 0, 0, .45); }
.name header { height: 19px; padding: 0 1px 0 5px; background: #c64c2d; color: #ffe9e2; }
.nbody { padding: 5px 8px 0 15px; }
.nbody > p { margin-left: -4px; }
.pf { display: block; margin-top: 6px; line-height: 9px; }
.row { display: flex; justify-content: space-between; margin: 0 8px 0 0; }
.nbody .row > button { width: 52px; height: 14px; }
.fieldsel { width: 200px; height: 14px; background: #d3e6f6; border: 1px solid #6fa2cc; }
.fieldsel select, .fmt select { padding-left: 1px; }
.list { position: absolute; left: -1px; right: -1px; top: 12px; z-index: 2; background: #fff; border: 1px solid #5a87b5; }
.list li { height: 9px; line-height: 9px; padding-left: 1px; white-space: nowrap; }
.list li:nth-child(even) { height: 8px; line-height: 8px; }
.list .on { background: #3997ee; color: #d6ecff; }
.nm { display: block; width: 260px; height: 14px; margin-top: 16px; background: #fff; border: 1px solid #a6b6c9; }
.nbody .inc { margin: 11px 0 16px -4px; height: 10px; }
.fmt { width: 260px; height: 13px; background: #e4e7e9; border: 1px solid #bdc3c9; }
.nums { display: flex; gap: 4px; margin-top: 6px; }
.nums label { display: block; width: 92px; }
.nums input { display: block; width: 92px; height: 14px; margin-top: 1px; padding-left: 4px; background: #fff; border: 1px solid #aaa9ab; }
.btns { display: flex; justify-content: flex-end; gap: 5px; margin-top: 16px; }
.btns button { width: 51px; height: 14px; }
.btns .ok { background: #e2eaf2; border: 1px solid #3a84c8; }
</style>
